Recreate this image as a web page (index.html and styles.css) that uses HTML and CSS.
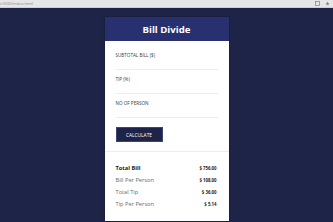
FILE: index.html
```html
<!DOCTYPE html>
<html lang="en">
  <head>
    <meta charset="UTF-8">
    <meta name="viewport" content="width=device-width, initial-scale=1.0">
    <title>Bill Divide</title>
    <link rel="stylesheet" href="styles.css">
  </head>
  <body>
    <div class="browser-bar">
      <span class="url">t:5500/index.html</span>
      <span class="bar-icons">
        <svg width="5" height="5" viewBox="0 0 10 10"><rect x="1" y="1" width="8" height="8" fill="none" stroke="#888" stroke-width="1.5"/></svg>
        <svg width="5" height="5" viewBox="0 0 10 10"><path d="M5 1 L6.2 4 L9 4.2 L6.8 6 L7.6 9 L5 7.3 L2.4 9 L3.2 6 L1 4.2 L3.8 4 Z" fill="#888"/></svg>
      </span>
    </div>
    <div class="page">
      <div class="card">
        <div class="card-header">
          <h1>Bill Divide</h1>
        </div>
        <div class="card-body">
          <form id="bill-form">
            <div class="form-group">
              <label for="subtotal">SUBTOTAL BILL ($)</label>
              <input type="text" id="subtotal" />
            </div>
            <div class="form-group">
              <label for="tip">TIP (%)</label>
              <input type="text" id="tip" />
            </div>
            <div class="form-group">
              <label for="people">NO OF PERSON</label>
              <input type="text" id="people" />
            </div>
            <button type="button" class="btn-calc">CALCULATE</button>
          </form>
        </div>
        <div class="results">
          <div class="row total">
            <span>Total Bill</span>
            <span class="value">$ 756.00</span>
          </div>
          <div class="row">
            <span>Bill Per Person</span>
            <span class="value">$ 108.00</span>
          </div>
          <div class="row">
            <span>Total Tip</span>
            <span class="value">$ 36.00</span>
          </div>
          <div class="row">
            <span>Tip Per Person</span>
            <span class="value">$ 5.14</span>
          </div>
        </div>
      </div>
    </div>
  </body>
</html>
```

FILE: styles.css
```css
:root {
  --background: #1e2448;
  --header: #283070;
  --card: #fff;
  --line: #ececf2;
  --text: #222;
  --label: #3a3a3a;
  --muted: #6a6a6a;
}

html, body {
  margin: 0;
  padding: 0;
}

body {
  font-family: "Open Sans", Arial, sans-serif;
  background-color: var(--background);
  height: 222px;
  overflow: hidden;
}

.browser-bar {
  height: 8px;
  background-color: #e6e6e6;
  border-bottom: 1px solid #cfcfcf;
  display: flex;
  align-items: center;
  justify-content: space-between;
  padding: 0 3px 0 0;
  box-sizing: border-box;
}

.url {
  font-size: 4px;
  color: #888;
}

.bar-icons {
  display: flex;
  gap: 5px;
}

.bar-icons svg {
  display: block;
}

.page {
  display: flex;
  justify-content: center;
  padding-top: 9px;
}

.card {
  width: 124px;
  background-color: var(--card);
  box-shadow: 0 0 2px rgba(0, 0, 0, 0.4);
}

.card-header {
  background-color: var(--header);
  height: 24px;
  display: flex;
  align-items: center;
  justify-content: center;
}

h1 {
  margin: 0;
  color: #fff;
  font-size: 9.6px;
  font-weight: 700;
}

.card-body {
  padding: 11px 11px 9px 11px;
  border-bottom: 1px solid var(--line);
}

.form-group {
  border-bottom: 1px solid var(--line);
  height: 17px;
  margin-bottom: 6px;
}

.form-group:last-of-type {
  margin-bottom: 9px;
}

label {
  display: block;
  font-size: 4.6px;
  line-height: 6px;
  color: var(--label);
}

input {
  display: block;
  width: 100%;
  border: none;
  padding: 0;
  height: 8px;
  outline: none;
}

.btn-calc {
  display: block;
  width: 47px;
  height: 15px;
  background-color: var(--background);
  color: #fff;
  border: 1px solid #3b4380;
  font-family: "Open Sans", Arial, sans-serif;
  font-size: 4.8px;
  padding: 0;
}

.results {
  padding: 10px 12px 11px 11px;
}

.row {
  display: flex;
  justify-content: space-between;
  align-items: center;
  height: 12px;
  font-size: 5.7px;
  color: var(--muted);
}

.row.total {
  color: var(--text);
  font-weight: 700;
}

.value {
  font-size: 4.3px;
  font-weight: 700;
  color: var(--text);
}
```
